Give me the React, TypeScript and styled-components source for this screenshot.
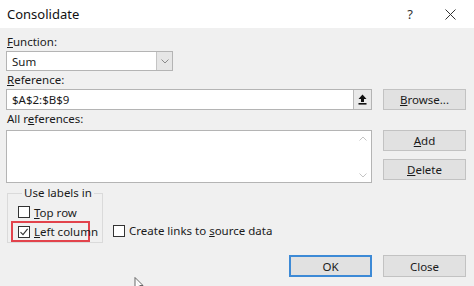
import React from "react";
import styled, { createGlobalStyle } from "styled-components";

const Global = createGlobalStyle`
  html, body { margin: 0; padding: 0; background: #f0f0f0; }
  body { font-family: "Noto Sans", "Open Sans", sans-serif; }
  * { box-sizing: border-box; }
`;

const Dialog = styled.div`
  position: relative;
  width: 474px;
  height: 286px;
  background: #f0f0f0;
  overflow: hidden;
  font-family: "Noto Sans", "Open Sans", sans-serif;
  font-size: 11.5px;
  color: #1a1a1a;
`;

const TitleBar = styled.div`
  height: 28px;
  background: #ffffff;
  display: flex;
  align-items: center;
  padding-left: 7px;
`;

const Title = styled.div`
  flex: 1;
  font-size: 13px;
  color: #111;
`;

const TitleButton = styled.div<{ $w: number }>`
  flex: none;
  width: ${(p) => p.$w}px;
  display: flex;
  justify-content: center;
  align-items: center;
  font-size: 13px;
  color: #333;
`;

const Body = styled.div`
  display: grid;
  grid-template-columns: 366px 83px;
  column-gap: 11px;
  padding: 6px 0 0 6px;
`;

const Label = styled.div`
  grid-column: 1;
  height: 16px;
  line-height: 16px;
  padding-left: 1px;
`;

const Field = styled.div<{ $w?: number; $h: number; $mt: number }>`
  grid-column: 1;
  width: ${(p) => (p.$w ? `${p.$w}px` : "100%")};
  height: ${(p) => p.$h}px;
  margin-top: ${(p) => p.$mt}px;
  margin-bottom: 1px;
  background: #ffffff;
  border: 1px solid #b4b4b4;
  display: flex;
  align-items: center;
  padding-left: 5px;
  position: relative;
`;

const FieldText = styled.span`
  flex: 1;
`;

const DropButton = styled.div`
  width: 16px;
  height: 100%;
  background: #e6e6e6;
  border-left: 1px solid #c4c4c4;
  display: flex;
  align-items: center;
  justify-content: center;
`;

const PickButton = styled.div`
  width: 18px;
  height: 100%;
  background: #e9e9e9;
  border-left: 1px solid #b9b9b9;
  display: flex;
  align-items: center;
  justify-content: center;
`;

const ScrollCol = styled.div`
  position: absolute;
  right: 0;
  top: 0;
  bottom: 0;
  width: 17px;
  display: flex;
  flex-direction: column;
  justify-content: space-between;
  align-items: center;
  padding: 5px 0 4px;
`;

const Button = styled.div<{ $mt?: number; $primary?: boolean; $h?: number }>`
  width: 83px;
  height: ${(p) => p.$h ?? 21}px;
  margin-top: ${(p) => p.$mt ?? 0}px;
  background: #e1e1e1;
  border: ${(p) => (p.$primary ? "2px solid #3d8ad6" : "1px solid #c2c2c2")};
  display: flex;
  align-items: center;
  justify-content: center;
  color: #1a1a1a;
`;

const SideCol = styled.div<{ $pt: number }>`
  grid-column: 2;
  display: flex;
  flex-direction: column;
  gap: 8px;
  padding-top: ${(p) => p.$pt}px;
`;

const BottomArea = styled.div`
  grid-column: 1 / span 2;
  display: flex;
  align-items: flex-start;
`;

const Group = styled.fieldset`
  margin: 2px 0 0 1px;
  width: 96px;
  height: 57px;
  border: 1px solid #dadada;
  padding: 4px 0 0 10px;
  display: flex;
  flex-direction: column;
  gap: 1px;
`;

const Legend = styled.legend`
  padding: 0 2px;
  margin-left: 4px;
  line-height: 14px;
`;

const CheckRow = styled.label<{ $hl?: boolean }>`
  display: flex;
  align-items: center;
  gap: 4px;
  white-space: nowrap;
  height: ${(p) => (p.$hl ? 21 : 16)}px;
  width: ${(p) => (p.$hl ? "79px" : "auto")};
  margin-left: ${(p) => (p.$hl ? -7 : 0)}px;
  padding-left: ${(p) => (p.$hl ? 5 : 0)}px;
  border: ${(p) => (p.$hl ? "2px solid #e2434c" : "none")};
`;

const Box = styled.span`
  flex: none;
  width: 12px;
  height: 12px;
  background: #ffffff;
  border: 1px solid #333333;
  display: flex;
  align-items: center;
  justify-content: center;
`;

const LinksRow = styled.div`
  display: flex;
  align-items: center;
  gap: 4px;
  margin-left: 10px;
  margin-top: 39px;
  white-space: nowrap;
`;

const Footer = styled.div`
  grid-column: 1 / span 2;
  display: flex;
  justify-content: flex-end;
  gap: 11px;
  margin-top: 12px;
`;

const Cursor = styled.svg`
  position: absolute;
  left: 134px;
  top: 277px;
`;

const Check = () => (
  <svg width="10" height="10" viewBox="0 0 10 10">
    <path d="M1.5 5.2 L4 7.6 L8.6 1.8" fill="none" stroke="#333" strokeWidth="1.1" />
  </svg>
);

export default function App() {
  return (
    <>
      <Global />
      <Dialog>
        <TitleBar>
          <Title>Consolidate</Title>
          <TitleButton $w={32}>?</TitleButton>
          <TitleButton $w={48}>
            <svg width="11" height="11" viewBox="0 0 11 11">
              <path d="M0.5 0.5 L10.5 10.5 M10.5 0.5 L0.5 10.5" stroke="#333" strokeWidth="1" />
            </svg>
          </TitleButton>
        </TitleBar>
        <Body>
          <Label>
            <u>F</u>unction:
          </Label>
          <Field $w={167} $h={20} $mt={1}>
            <FieldText>Sum</FieldText>
            <DropButton>
              <svg width="8" height="5" viewBox="0 0 8 5">
                <path d="M0.5 0.5 L4 4 L7.5 0.5" fill="none" stroke="#8a8a8a" strokeWidth="1" />
              </svg>
            </DropButton>
          </Field>
          <Label>
            <u>R</u>eference:
          </Label>
          <Field $h={21} $mt={1}>
            <FieldText>$A$2:$B$9</FieldText>
            <PickButton>
              <svg width="9" height="11" viewBox="0 0 9 11">
                <path d="M4.5 0.5 L8.5 5 L6 5 L6 8 L3 8 L3 5 L0.5 5 Z" fill="#111" />
                <rect x="0.5" y="9" width="8" height="1.6" fill="#111" />
              </svg>
            </PickButton>
          </Field>
          <SideCol $pt={1} style={{ gridRow: 4 }}>
            <Button>
              <u>B</u>rowse...
            </Button>
          </SideCol>
          <Label style={{ gridRow: 5 }}>
            All r<u>e</u>ferences:
          </Label>
          <Field $h={53} $mt={3} style={{ gridRow: 6 }}>
            <ScrollCol>
              <svg width="8" height="5" viewBox="0 0 8 5">
                <path d="M0.5 4.5 L4 1 L7.5 4.5" fill="none" stroke="#c4c4c4" strokeWidth="1" />
              </svg>
              <svg width="8" height="5" viewBox="0 0 8 5">
                <path d="M0.5 0.5 L4 4 L7.5 0.5" fill="none" stroke="#c4c4c4" strokeWidth="1" />
              </svg>
            </ScrollCol>
          </Field>
          <SideCol $pt={3} style={{ gridRow: 6 }}>
            <Button>
              <u>A</u>dd
            </Button>
            <Button>
              <u>D</u>elete
            </Button>
          </SideCol>
          <BottomArea style={{ gridRow: 7 }}>
            <Group>
              <Legend>Use labels in</Legend>
              <CheckRow>
                <Box />
                <span>
                  <u>T</u>op row
                </span>
              </CheckRow>
              <CheckRow $hl>
                <Box>
                  <Check />
                </Box>
                <span>
                  <u>L</u>eft column
                </span>
              </CheckRow>
            </Group>
            <LinksRow>
              <Box />
              <span>
                Create links to <u>s</u>ource data
              </span>
            </LinksRow>
          </BottomArea>
          <Footer style={{ gridRow: 8 }}>
            <Button $primary $h={22}>
              OK
            </Button>
            <Button $h={22}>Close</Button>
          </Footer>
        </Body>
        <Cursor width="12" height="12" viewBox="0 0 12 12">
          <path d="M1 0.5 L1 12 L3.5 9.5 L6 14 M1 0.5 L9 8.5 L5.5 8.5" fill="#fff" stroke="#444" strokeWidth="0.8" />
        </Cursor>
      </Dialog>
    </>
  );
}
